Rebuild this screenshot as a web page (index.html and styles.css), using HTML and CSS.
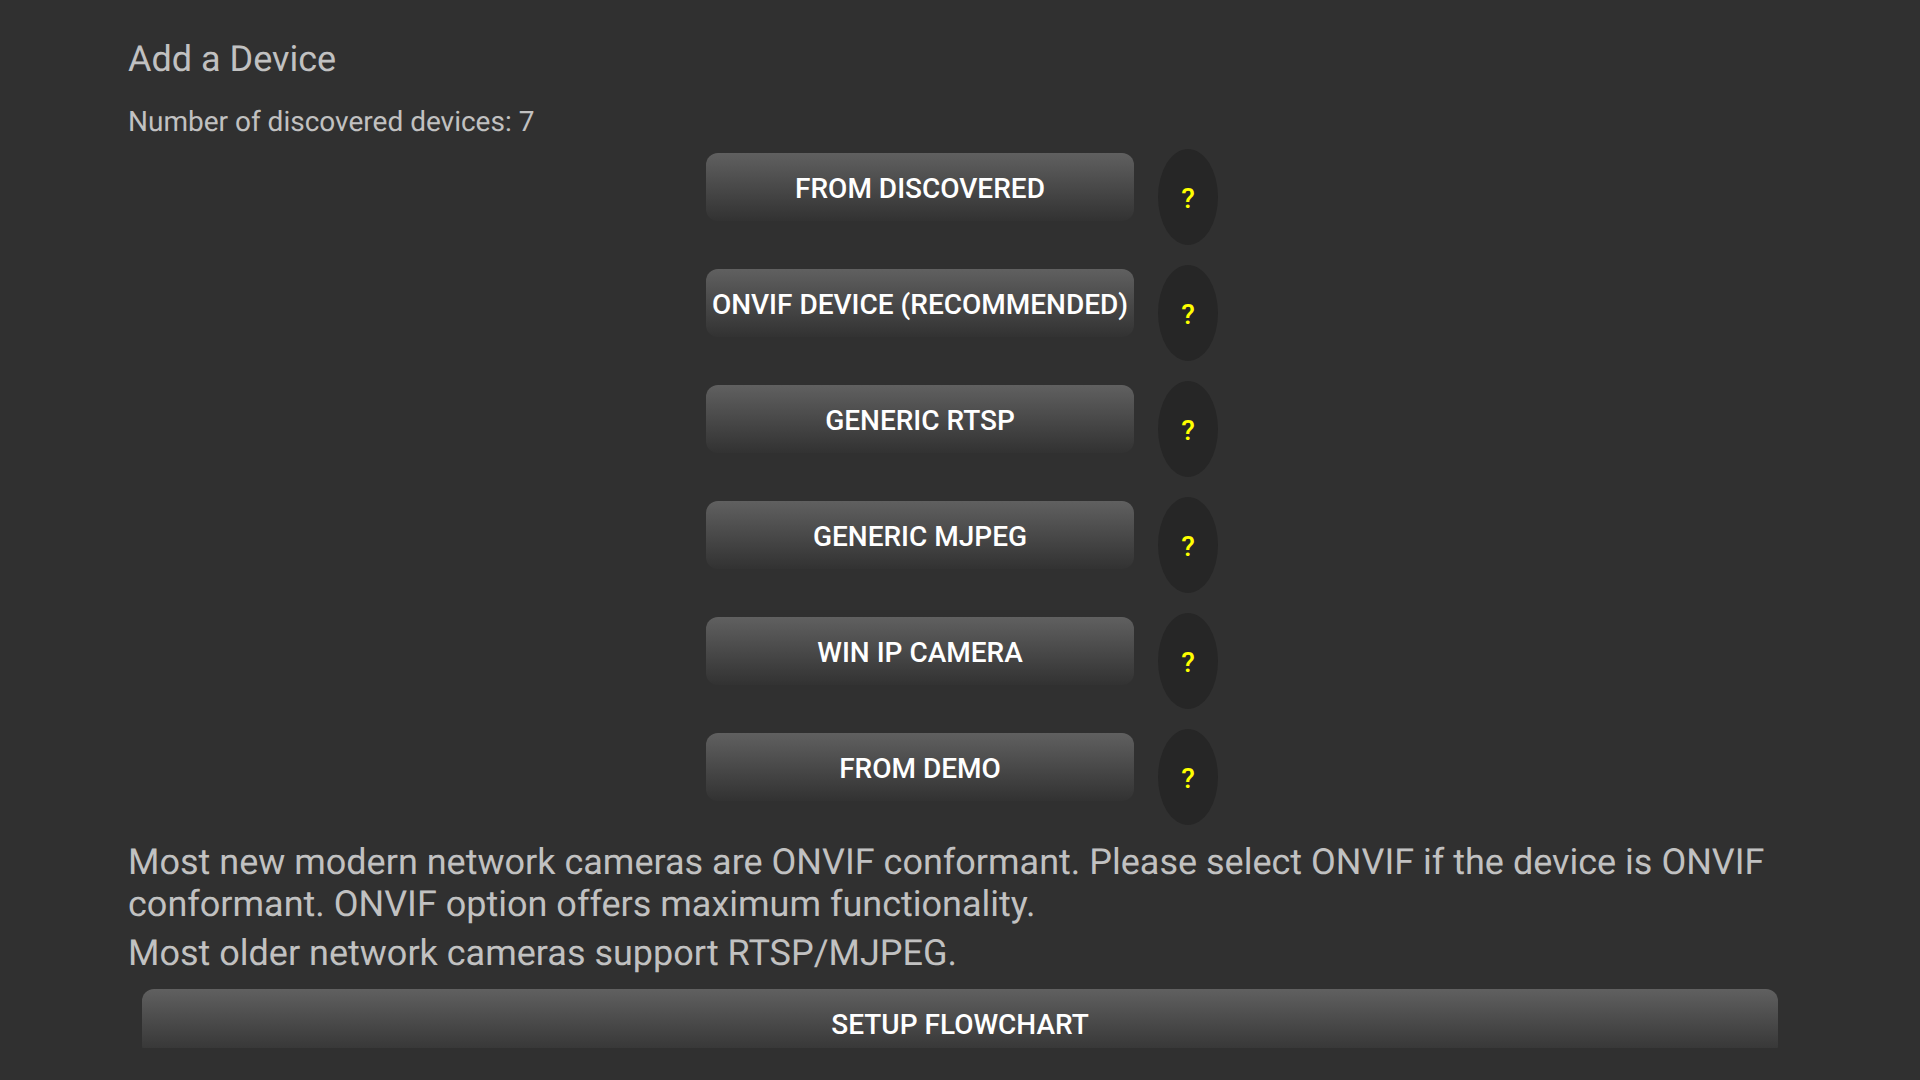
FILE: index.html
```html
<!DOCTYPE html>
<html lang="en">
<head>
<meta charset="utf-8">
<title>Add a Device</title>
<link rel="stylesheet" href="styles.css">
</head>
<body>
<main class="page">
  <h1 class="title">Add a Device</h1>
  <p class="count">Number of discovered devices: 7</p>
  <div class="options">
    <div class="option"><button class="btn">FROM DISCOVERED</button><button class="help">?</button></div>
    <div class="option"><button class="btn">ONVIF DEVICE (RECOMMENDED)</button><button class="help">?</button></div>
    <div class="option"><button class="btn">GENERIC RTSP</button><button class="help">?</button></div>
    <div class="option"><button class="btn">GENERIC MJPEG</button><button class="help">?</button></div>
    <div class="option"><button class="btn">WIN IP CAMERA</button><button class="help">?</button></div>
    <div class="option"><button class="btn">FROM DEMO</button><button class="help">?</button></div>
  </div>
  <p class="note">Most new modern network cameras are ONVIF conformant. Please select ONVIF if the device is ONVIF conformant. ONVIF option offers maximum functionality.</p>
  <p class="note">Most older network cameras support RTSP/MJPEG.</p>
  <button class="btn btn-wide">SETUP FLOWCHART</button>
</main>
</body>
</html>
```
FILE: styles.css
```css
* { box-sizing: border-box; }
body {
  margin: 0;
  height: 100vh;
  padding: 32px 128px;
  overflow: hidden;
  background: #303030;
  color: #c1c1c1;
  font-family: Roboto, sans-serif;
  text-rendering: geometricPrecision;
}
.page {
  height: 100%;
  overflow: hidden;
}
.title, .count, .note { margin: 0; font-weight: 400; }
.title { font-size: 36px; line-height: 54px; }
.count { margin-top: 17px; font-size: 28px; line-height: 38px; }
.options {
  display: flex;
  flex-direction: column;
  align-items: center;
  gap: 20px;
  margin: 8px 0 16px;
  padding-left: 4px;
}
.option {
  display: flex;
  align-items: flex-start;
  gap: 24px;
}
.btn {
  width: 428px;
  height: 68px;
  margin-top: 4px;
  padding: 4px 0 0;
  border: 0;
  border-radius: 12px;
  background: linear-gradient(#606060, #323232);
  color: #fff;
  font: 500 28px/64px Roboto, sans-serif;
  white-space: nowrap;
}
.help {
  width: 60px;
  height: 96px;
  padding: 4px 0 0;
  border: 0;
  border-radius: 50%;
  background: #262626;
  color: #ff0;
  font: 500 28px/92px Roboto, sans-serif;
}
.note { margin-bottom: 7px; font-size: 36px; line-height: 42px; }
.btn-wide {
  display: block;
  width: calc(100% - 28px);
  margin: 15px auto 0;
}
```
